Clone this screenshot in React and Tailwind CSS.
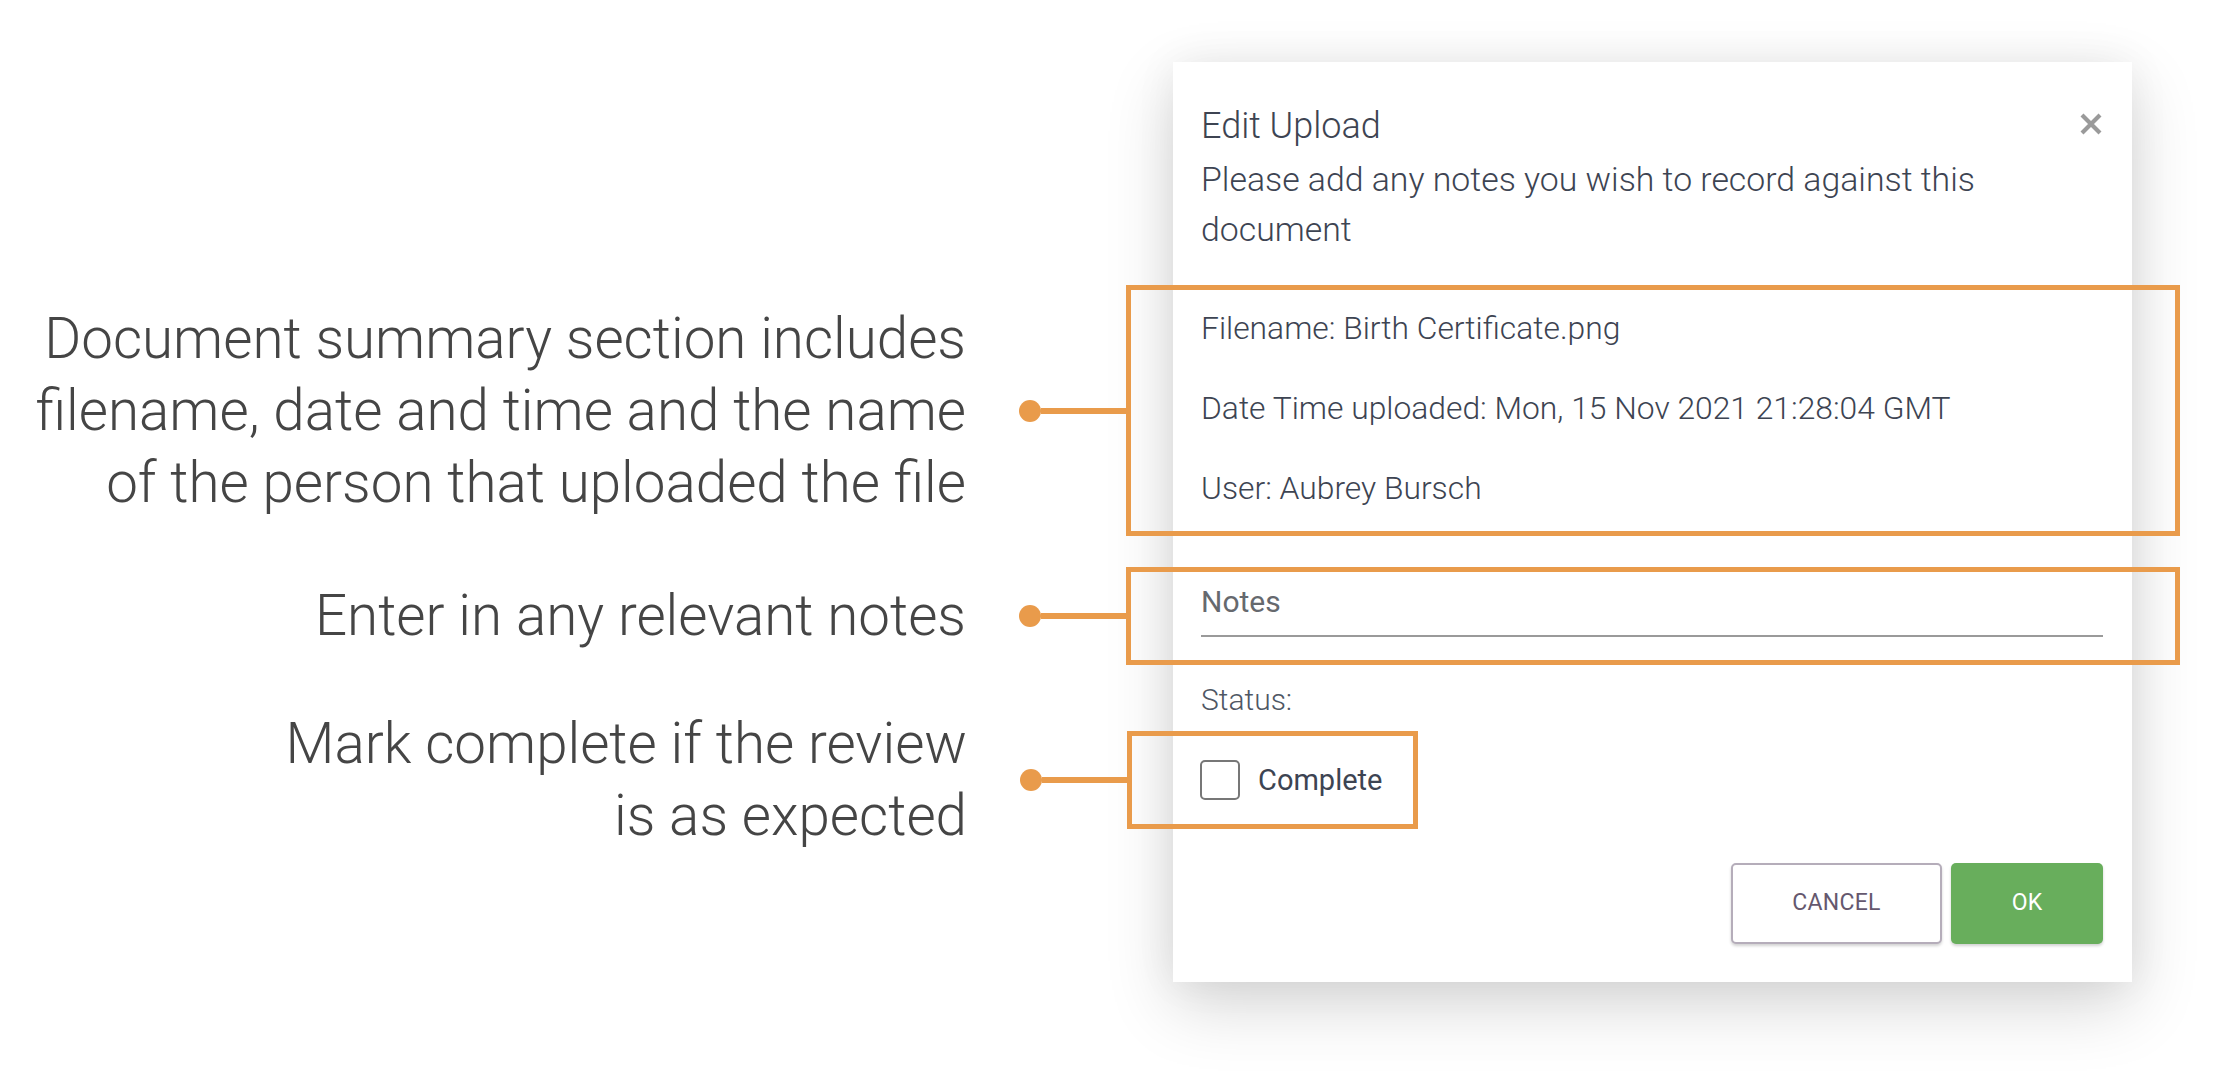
import React from "react";

const ORANGE = "bg-[#e99b4b]";

function Annotation({ lines }) {
  return (
    <div className="absolute right-full top-1/2 -translate-y-1/2 flex items-center">
      <div className="text-right whitespace-nowrap font-['Roboto',sans-serif] font-light text-[56.5px] leading-[72px] text-[#454545]">
        {lines.map((l, i) => (
          <div key={i}>{l}</div>
        ))}
      </div>
      <div className={`ml-[53px] w-[22px] h-[22px] rounded-full ${ORANGE}`} />
      <div className={`w-[90px] h-[6px] ${ORANGE}`} />
    </div>
  );
}

function CloseIcon() {
  return (
    <svg width="22" height="22" viewBox="0 0 22 22" className="block">
      <path d="M2 2 L20 20 M20 2 L2 20" stroke="#9a9a9a" strokeWidth="4.2" strokeLinecap="butt" />
    </svg>
  );
}

export default function App() {
  return (
    <div className="w-[2218px] h-[1092px] bg-white overflow-hidden font-['Roboto',sans-serif]">
      <div className="pl-[1173px] pt-[62px]">
        <div className="relative w-[959px] bg-white pt-[39px] pb-[38px] pl-[28px] pr-[29px] shadow-[0_24px_64px_rgba(0,0,0,0.16),0_0_40px_rgba(0,0,0,0.06)] text-[#3d4452]">
          {/* Header */}
          <div className="flex items-start justify-between">
            <div className="text-[36px] leading-[50px] font-light">Edit Upload</div>
            <div className="mt-[12px] mr-[1px]">
              <CloseIcon />
            </div>
          </div>
          <div className="mt-[4px] max-w-[840px] text-[33.8px] leading-[50px] font-light">
            Please add any notes you wish to record against this document
          </div>

          {/* Summary */}
          <div className="relative mt-[30px] -ml-[75px] -mr-[77px] border-[5px] border-[#e99b4b] pl-[70px] pr-[72px] pt-[18px] pb-[23px]">
            <Annotation
              lines={[
                "Document summary section includes",
                "filename, date and time and the name",
                "of the person that uploaded the file",
              ]}
            />
            <div className="flex flex-col gap-[40px] text-[31.8px] leading-[40px] font-light">
              <div>Filename: Birth Certificate.png</div>
              <div>Date Time uploaded: Mon, 15 Nov 2021 21:28:04 GMT</div>
              <div>User: Aubrey Bursch</div>
            </div>
          </div>

          {/* Notes */}
          <div className="relative mt-[31px] -ml-[75px] -mr-[77px] border-[5px] border-[#e99b4b] pl-[70px] pr-[72px] pt-[10px] pb-[23px]">
            <Annotation lines={["Enter in any relevant notes"]} />
            <div className="text-[30px] leading-[40px] text-[#66696e]">Notes</div>
            <div className="mt-[13px] h-[2px] bg-[#9a9a9a]" />
          </div>

          {/* Status */}
          <div className="mt-[15px] text-[30px] leading-[40px] font-light text-[#4f5764]">Status:</div>

          <div className="relative mt-[11px] -ml-[74px] w-[291px] border-[5px] border-[#e99b4b] pl-[68px] h-[98px] flex items-center">
            <Annotation lines={["Mark complete if the review", "is as expected"]} />
            <div className="w-[40px] h-[40px] rounded-[5px] border-[2.5px] border-[#777777] bg-white" />
            <div className="ml-[18px] text-[29px] leading-[40px] text-[#3d4452]">Complete</div>
          </div>

          {/* Buttons */}
          <div className="mt-[34px] flex justify-end gap-[9px]">
            <div className="w-[211px] h-[81px] rounded-[5px] border-2 border-[#b5adba] bg-white flex items-center justify-center text-[23px] text-[#65586e] tracking-[0.3px] shadow-[0_2px_3px_rgba(0,0,0,0.18)]">
              CANCEL
            </div>
            <div className="w-[152px] h-[81px] rounded-[5px] bg-[#68ae5c] flex items-center justify-center text-[23px] text-white shadow-[0_2px_3px_rgba(0,0,0,0.18)]">
              OK
            </div>
          </div>
        </div>
      </div>
    </div>
  );
}
